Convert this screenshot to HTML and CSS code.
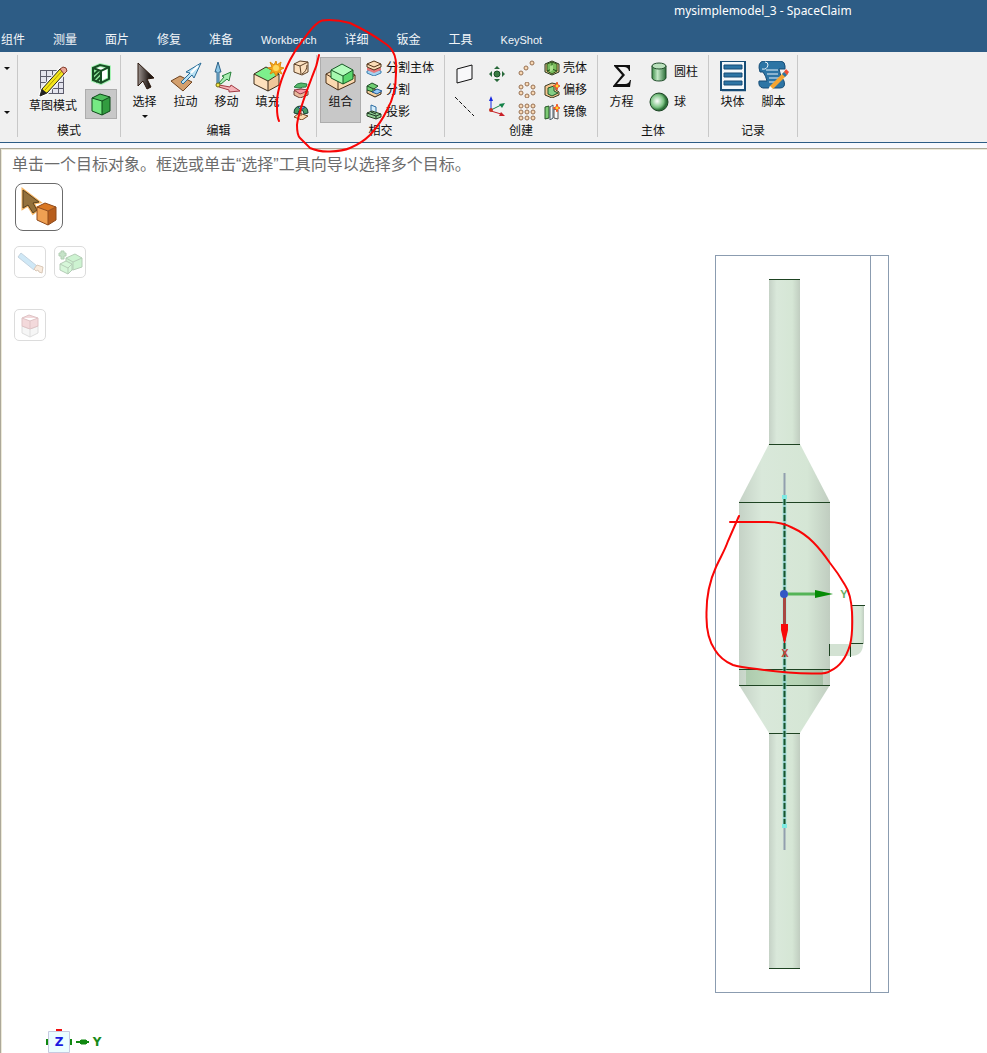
FILE: index.html
```html
<!DOCTYPE html>
<html lang="zh-CN">
<head>
<meta charset="utf-8">
<title>mysimplemodel_3 - SpaceClaim</title>
<link rel="stylesheet" href="styles.css">
</head>
<body>
<header class="titlebar">
  <h1 class="title">mysimplemodel_3 - SpaceClaim</h1>
  <nav class="tabs">
    <button class="tab">组件</button>
    <button class="tab">测量</button>
    <button class="tab">面片</button>
    <button class="tab">修复</button>
    <button class="tab">准备</button>
    <button class="tab latin">Workbench</button>
    <button class="tab">详细</button>
    <button class="tab">钣金</button>
    <button class="tab">工具</button>
    <button class="tab latin">KeyShot</button>
  </nav>
</header>

<div class="ribbon">
  <section class="group stub">
    <button class="drop" aria-label="展开"><span class="caret"></span></button>
    <button class="drop" aria-label="展开"><span class="caret"></span></button>
  </section>

  <section class="group mode">
    <div class="tools">
      <button class="big sketch">
        <svg width="32" height="36" viewBox="0 0 32 36">
          <path d="M3 9h24v24H3z" fill="#e4e4ee"/>
          <path d="M3.500 9v24M9.500 9v24M15.500 9v24M21.500 9v24M26.500 9v24M3 9.500h24M3 15.500h24M3 21.500h24M3 27.500h24M3 32.500h24" stroke="#5c5c6c" fill="none"/>
          <path d="M5 28 23 8l5 4L10 32l-7 3z" fill="#f4e51c" stroke="#fff" stroke-width="3"/>
          <path d="M5 28 23 8l5 4L10 32l-7 3z" fill="#f4e51c" stroke="#222"/>
          <path d="M8 29 25 10" stroke="#a99800" stroke-width="1"/>
          <path d="M23 8l3-2q4 0 4 4l-3 3z" fill="#e9a596" stroke="#85402f"/>
          <path d="M3 35l2-7 5 4z" fill="#222"/>
        </svg>
        <span>草图模式</span>
      </button>
      <div class="stack">
        <button class="toggle" aria-label="剖面模式">
          <svg width="22" height="24" viewBox="0 0 22 24">
            <path d="M3 6 10 3l9 2v12l-8 4-8-3z" fill="#fff" stroke="#a5f3b4" stroke-width="4"/>
            <path d="M3 6l8 3v12l-8-3z" fill="#8fe79c"/>
            <path d="M3 13l6-5M3 18l8-8M6 20l5-5" stroke="#174e24" stroke-width="2"/>
            <path d="M3 6 10 3l9 2v12l-8 4-8-3zM3 6l8 3 8-4M11 9v12" fill="none" stroke="#174e24" stroke-width="2"/>
          </svg>
        </button>
        <button class="toggle on" aria-label="三维模式">
          <svg width="22" height="24" viewBox="0 0 22 24">
            <path d="M2 6v13l10 4V9z" fill="#76ea84"/><path d="M12 9v14l8-4V5z" fill="#329c40"/><path d="M2 6l8-4 10 3-8 4z" fill="#4fc05c"/>
            <path d="M2 6v13l10 4 8-4V5L10 2zM2 6l10 3 8-4M12 9v14" fill="none" stroke="#0d4a18"/>
          </svg>
        </button>
      </div>
    </div>
    <h2 class="caption">模式</h2>
  </section>

  <section class="group edit">
    <div class="tools">
      <button class="big">
        <svg width="32" height="32" viewBox="0 0 32 32">
          <defs><linearGradient id="cur"><stop offset="0" stop-color="#9d9490"/><stop offset=".7" stop-color="#241c18"/></linearGradient></defs>
          <path d="M9 2v23l5-5 4 8 4-2-4-8 7-1z" fill="url(#cur)" stroke="#2a170c"/>
        </svg>
        <span>选择</span><i class="caret"></i>
      </button>
      <button class="big">
        <svg width="32" height="32" viewBox="0 0 32 32">
          <path d="M1 20l9-5 12 6-9 9z" fill="#d3a06e" stroke="#6f431f"/>
          <path d="M11 21 20 12l-4-1L31 2l-7 15-2-3-9 9z" fill="#b9e2f5" stroke="#2b6c96"/><path d="M21 12 28 5" stroke="#fff" stroke-width="2"/>
        </svg>
        <span>拉动</span>
      </button>
      <button class="big">
        <svg width="32" height="32" viewBox="0 0 32 32">
          <path d="M6 23V11H4L7 1l3 10H8v12z" fill="#8cc6e6" stroke="#2b6288"/>
          <path d="M8 22l5-6-2-1 9-4-2 9-2-2-6 5z" fill="#a8eeb2" stroke="#268139"/>
          <path d="M8 24l11 2 1-2 9 6-11 1v-2L8 26z" fill="#f5b3b8" stroke="#a13b44"/>
          <circle cx="7" cy="24" r="2" fill="#f4e94a" stroke="#716713"/>
        </svg>
        <span>移动</span>
      </button>
      <button class="big">
        <svg width="32" height="32" viewBox="0 0 32 32">
          <path d="M2 13v10l14 7V20z" fill="#fde0bd"/><path d="M16 20v10l11-6V13z" fill="#f0c79a"/><path d="M2 13 14 6l13 7-11 7z" fill="#7df08c"/>
          <path d="M2 13v10l14 7 11-6V13L14 6zM2 13l14 7 11-7M16 20v10" fill="none" stroke="#3c2b19"/>
          <path d="M24 0l1 4 4-3-1 5 4 1-4 2 2 4-4-2-2 4-2-4-4 2 2-4-4-2 4-1-2-5 4 3z" fill="#f7a81c" stroke="#d98a0b"/><circle cx="24" cy="7" r="3" fill="#ffd85c"/>
        </svg>
        <span>填充</span>
      </button>
      <div class="stack small">
        <button class="mini" aria-label="融合">
          <svg width="16" height="16" viewBox="0 0 16 16"><path d="M1 4l6-3 8 1v10l-6 3-8-3z" fill="#fbe0c0" stroke="#5b3f26"/><path d="M1 4l6 2 8-4M7 6l1 8M9 14q5-3 5-9" fill="none" stroke="#5b3f26"/></svg>
        </button>
        <button class="mini" aria-label="替换">
          <svg width="16" height="16" viewBox="0 0 16 16"><path d="M1 9l7-2 7 2v4l-8 3-6-3z" fill="#e9b99a" stroke="#6d4438"/><path d="M1 8l7-1 7 1-5 3-3 1z" fill="#f799a4" stroke="#8e3943"/><path d="M1 5q3-4 7-4l6 1-1 3q-4 0-6 1-3 0-6-1z" fill="#55b86a" stroke="#2b7a42"/></svg>
        </button>
        <button class="mini" aria-label="调整面">
          <svg width="16" height="16" viewBox="0 0 16 16"><path d="M1 13l5-4 9 3-6 4z" fill="#fbd9ad" stroke="#754623"/><path d="M1 9Q1 2 8 2t7 7l-4 1q0-4-3-4t-3 4z" fill="#479b64" stroke="#153f31"/><path d="M5 3l3 3 4-3" fill="#7cafe5" stroke="#203d7c"/><path d="M8 6v6" stroke="#754623"/></svg>
        </button>
      </div>
    </div>
    <h2 class="caption">编辑</h2>
  </section>

  <section class="group intersect">
    <div class="tools">
      <button class="big on">
        <svg width="32" height="32" viewBox="0 0 32 32">
          <path d="M1 13v9l12 7 17-8v-7L19 8z" fill="#fbd9b0"/><path d="M1 13v9l12 7 17-8v-7l-4-2M1 13l6-3M1 13l12 7 5-2M30 14l-6 4M13 20v9" fill="none" stroke="#4c3118"/>
          <path d="M6 9v8l12 6V15z" fill="#a5f9ae"/><path d="M18 15v8l10-5V9z" fill="#5bd76d"/><path d="M6 9l11-6 11 6-10 6z" fill="#b4fcbd"/>
          <path d="M6 9v8l12 6 10-5V9L17 3zM6 9l12 6 10-6M18 15v8" fill="none" stroke="#155a24"/>
        </svg>
        <span>组合</span>
      </button>
      <div class="stack list">
        <button class="row"><svg width="16" height="16" viewBox="0 0 16 16"><path d="M1 11l7-2 7 2v2l-7 3-7-3z" fill="#a6d2ef" stroke="#3b7fb0"/><path d="M1 8l7-2 7 2v2l-7 3-7-3z" fill="#e9777a"/><path d="M1 4l7-3 7 3v3l-7 3-7-3z" fill="#fbdcb6" stroke="#513419"/><path d="M1 4l7 3 7-3" fill="none" stroke="#513419"/></svg><span>分割主体</span></button>
        <button class="row"><svg width="16" height="16" viewBox="0 0 16 16"><path d="M1 8l5-2 9 4v2l-6 3-8-4z" fill="#f5d09e" stroke="#342412"/><path d="M1 4l5-3 6 3-4 3zM1 4v4l6 2V7" fill="#6fce73" stroke="#1d4f25"/><path d="M6 10l5-3 5 2-5 3z" fill="#93c9f7" stroke="#255b93"/></svg><span>分割</span></button>
        <button class="row"><svg width="16" height="16" viewBox="0 0 16 16"><path d="M5 1l5 2v7L5 8z" fill="#d6eefc" stroke="#286aa0"/><path d="M1 9l5-2 9 3v3l-5 2-9-3z" fill="#8fce92" stroke="#263f23"/><path d="M1 9l9 3 5-2M10 12v3M5 8l5 2" fill="none" stroke="#1d3425"/></svg><span>投影</span></button>
      </div>
    </div>
    <h2 class="caption">相交</h2>
  </section>

  <section class="group create">
    <div class="tools">
      <div class="stack pair">
        <button class="mini" aria-label="平面"><svg width="20" height="22" viewBox="0 0 20 22"><path d="M2 6l15-4v14L2 20z" fill="#f8f8fa" stroke="#111"/></svg></button>
        <button class="mini" aria-label="轴"><svg width="20" height="22" viewBox="0 0 20 22"><path d="M0 2l19 19" stroke="#111" stroke-dasharray="4 2"/></svg></button>
      </div>
      <div class="stack pair">
        <button class="mini" aria-label="点"><svg width="20" height="22" viewBox="0 0 20 22"><circle cx="10" cy="11" r="3" fill="#397c42" stroke="#184e25"/><path d="M10 3l3 3H7zM10 19l3-3H7zM2 11l3-3v6zM18 11l-3-3v6z" fill="#28693a"/></svg></button>
        <button class="mini" aria-label="坐标系"><svg width="20" height="22" viewBox="0 0 20 22"><path d="M4 16V4" stroke="#1628e0"/><path d="M4 1l2 5H2z" fill="#1628e0"/><path d="M4 15l10-5" stroke="#16834a"/><path d="M18 8l-3 5-3-4z" fill="#16834a"/><path d="M4 16l10 3" stroke="#c92028"/><path d="M18 21l-6 0 2-4z" fill="#c92028"/><circle cx="4" cy="15" r="2" fill="#c73323"/></svg></button>
      </div>
      <div class="stack small">
        <button class="mini" aria-label="线性阵列"><svg width="18" height="16" viewBox="0 0 18 16"><g fill="#f8d8b4" stroke="#967052"><circle cx="3" cy="13" r="2"/><circle cx="8" cy="8" r="2"/><circle cx="14" cy="3" r="2"/></g></svg></button>
        <button class="mini" aria-label="圆形阵列"><svg width="18" height="16" viewBox="0 0 18 16"><g fill="#f8d8b4" stroke="#967052"><circle cx="9" cy="2" r="2"/><circle cx="3" cy="5" r="2"/><circle cx="15" cy="5" r="2"/><circle cx="3" cy="11" r="2"/><circle cx="15" cy="11" r="2"/><circle cx="9" cy="14" r="2"/></g></svg></button>
        <button class="mini" aria-label="填充阵列"><svg width="18" height="18" viewBox="0 -1 18 18"><g fill="#f8d8b4" stroke="#967052"><circle cx="3" cy="2" r="2"/><circle cx="9" cy="2" r="2"/><circle cx="15" cy="2" r="2"/><circle cx="3" cy="8" r="2"/><circle cx="9" cy="8" r="2"/><circle cx="15" cy="8" r="2"/><circle cx="3" cy="14" r="2"/><circle cx="9" cy="14" r="2"/><circle cx="15" cy="14" r="2"/></g></svg></button>
      </div>
      <div class="stack list">
        <button class="row"><svg width="16" height="16" viewBox="0 0 16 16"><path d="M1 4l7-3 7 3v8l-7 3-7-3z" fill="#e8bd88" stroke="#233b20"/><path d="M3 4l5-2 5 2v7l-5 3-5-3z" fill="#78bd5d" stroke="#35551d"/><path d="M8 2v7l-5 2M8 9l5 2" fill="none" stroke="#23501d"/><path d="M6 6l3-1v5l-3 2z" fill="#a9e08c"/></svg><span>壳体</span></button>
        <button class="row"><svg width="16" height="16" viewBox="0 0 16 16"><path d="M1 4l7-3 4 1v6l3 2v3l-7 3-7-3z" fill="#f5c48e" stroke="#3a3a21"/><path d="M4 6l6-2v5l4 2-6 3-4-2z" fill="#84cf86" stroke="#22542b"/><path d="M13 0l1 3 2 1-2 1-1 3-1-3-3-1 3-1z" fill="#ffda21" stroke="#ed542a"/></svg><span>偏移</span></button>
        <button class="row"><svg width="16" height="16" viewBox="0 0 16 16"><path d="M1 3l4-1v12l-4 1z" fill="#7cca74" stroke="#255624"/><path d="M6 3l3-2v13l-3 2z" fill="#f2f5f8" stroke="#465b67"/><path d="M10 5l4 1v9l-4-1z" fill="#fafafa" stroke="#555"/><path d="M13 0l1 3 2 1-2 1-1 3-1-3-3-1 3-1z" fill="#ffda21" stroke="#ed542a"/></svg><span>镜像</span></button>
      </div>
    </div>
    <h2 class="caption">创建</h2>
  </section>

  <section class="group bodies">
    <div class="tools">
      <button class="big">
        <svg width="32" height="32" viewBox="0 0 32 32"><path d="M8 4h16v6h-1q-1-4-5-4h-6l7 8-8 9h8q4 0 5-4h1l-1 7H7v-1l9-11-8-9z" fill="#111"/></svg>
        <span>方程</span>
      </button>
      <div class="stack solids">
        <button class="row"><svg width="20" height="22" viewBox="0 0 20 22">
          <defs><linearGradient id="cyl"><stop offset="0" stop-color="#3d8d48"/><stop offset=".4" stop-color="#c3e9c6"/><stop offset="1" stop-color="#296d37"/></linearGradient><radialGradient id="sph" cx=".4" cy=".45"><stop offset="0" stop-color="#fff"/><stop offset=".7" stop-color="#7dc384"/><stop offset="1" stop-color="#2d7138"/></radialGradient></defs>
          <path d="M3 5v12q1 3 7 3t7-3V5z" fill="url(#cyl)" stroke="#214d2b"/><ellipse cx="10" cy="5" rx="7" ry="3" fill="#b9e0bc" stroke="#214d2b"/></svg><span>圆柱</span></button>
        <button class="row"><svg width="20" height="20" viewBox="0 0 20 20"><circle cx="10" cy="10" r="9" fill="url(#sph)" stroke="#1b4424"/></svg><span>球</span></button>
      </div>
    </div>
    <h2 class="caption">主体</h2>
  </section>

  <section class="group record">
    <div class="tools">
      <button class="big">
        <svg width="32" height="32" viewBox="0 0 32 32"><path d="M5 1h24v30H5z" fill="#b8c6d2"/><path d="M4 0h24v29H4z" fill="#f4f8fb" stroke="#174d76" stroke-width="2"/><path d="M7 4h18v4H7zM7 12h18v4H7zM7 20h18v4H7z" fill="#2d75a5" stroke="#174d76"/></svg>
        <span>块体</span>
      </button>
      <button class="big">
        <svg width="32" height="32" viewBox="0 0 32 32">
          <path d="M5 0h18q4 1 4 5v3h-6q1 7 5 12 2 7-4 7H5q-5-1-4-7h8q-1-5-4-9H2Q-1 2 5 0z" fill="#2d75a5" stroke="#174d76"/>
          <path d="M4 8q5 1 6-4 0-3-3-3M8 9h12M9 13h11M11 17h11M11 21h10" fill="none" stroke="#e8f3f9"/>
          <path d="M12 25 27 10l3 3-15 15-5 2z" fill="#f6a530"/><path d="M12 25l3 3-6 3z" fill="#fff"/><path d="M26 11l2-3 3 3-2 3z" fill="#ef4e38"/><path d="M24 13l2-2 3 3-2 2z" fill="#2d75a5"/>
        </svg>
        <span>脚本</span>
      </button>
    </div>
    <h2 class="caption">记录</h2>
  </section>
</div>

<main class="viewport">
  <p class="prompt">单击一个目标对象。框选或单击“选择”工具向导以选择多个目标。</p>
  <div class="guides">
    <button class="guide primary" aria-label="选择目标">
      <svg width="40" height="40" viewBox="0 0 40 40">
        <path d="M4 3v18l5-3 5 8 4-3-4-7 6-1z" fill="#94713c" stroke="#f5b563" stroke-width="3"/><path d="M4 3v18l5-3 5 8 4-3-4-7 6-1z" fill="#94713c" stroke="#58401e"/>
        <path d="M18 20v13l11 5V24z" fill="#efa052"/><path d="M29 24v14l8-5V20z" fill="#b75e1d"/><path d="M18 20l8-4 11 4-8 4z" fill="#da7722"/><path d="M18 20v13l11 5 8-5V20l-11-4zM18 20l11 4 8-4M29 24v14" fill="none" stroke="#8f4a1a"/>
      </svg>
    </button>
    <div class="pairrow">
      <button class="guide" disabled aria-label="选择刀具">
        <svg width="30" height="30" viewBox="0 0 30 30"><path d="M3 10l3-4 16 13-3 4z" fill="#cfe8f6" stroke="#c3d3df"/><path d="M19 22l3-4 6 2-1 6-3-1-1-2-2 1z" fill="#f9ebdd" stroke="#d9c8b8"/></svg>
      </button>
      <button class="guide" disabled aria-label="选择要合并的主体">
        <svg width="30" height="30" viewBox="0 0 30 30"><path d="M11 11l9-4 7 4v9l-9 3-7-3z" fill="#cdf3d1" stroke="#b5cdb7"/><path d="M11 11l7 4 9-4M18 15v8" fill="none" stroke="#b5cdb7"/><path d="M5 17l6-3 6 3v6l-4 4-8-4z" fill="#d6f7d9" stroke="#b5cdb7"/><path d="M5 17l8 4 4-4M13 21v6" fill="none" stroke="#b5cdb7"/><path d="M6 4h3v2h2v3H9v3H6V9H4V6h2z" fill="#c6e3c8" stroke="#b2cfb4"/></svg>
      </button>
    </div>
    <button class="guide" disabled aria-label="选择要删除的区域">
      <svg width="30" height="30" viewBox="0 0 30 30"><path d="M7 16v7l8 4 8-4v-7l-8 3z" fill="#f6f6f6" stroke="#dedede"/><path d="M7 8l7-3 9 3v8l-8 3-8-3zM7 8l8 3 8-3M15 11v8" fill="#f3d9db" stroke="#dfc3c5"/><path d="M15 19v8" stroke="#dedede"/></svg>
    </button>
  </div>

  <svg class="model" width="200" height="760" viewBox="700 245 200 760" role="img" aria-label="模型">
    <defs>
      <linearGradient id="tube"><stop offset="0" stop-color="#c5d2c6"/><stop offset=".25" stop-color="#d9e8da"/><stop offset=".75" stop-color="#d5e6d5"/><stop offset="1" stop-color="#c0cdc0"/></linearGradient>
      <linearGradient id="band"><stop offset="0" stop-color="#aecbae"/><stop offset=".3" stop-color="#bad8b9"/><stop offset=".7" stop-color="#b5d3b4"/><stop offset="1" stop-color="#a6bfa6"/></linearGradient>
    </defs>
    <g fill="none" stroke="#8b9cb0" shape-rendering="crispEdges"><path d="M715.500 255.500h173v737h-173zM870.500 255v738"/></g>
    <g fill="url(#tube)">
      <path d="M769 279h31v165h-31z"/><path d="M769 444h31l30 58h-91z"/><path d="M739 502h91v183h-91z"/>
      <path d="M739 685h91l-30 48h-31z"/><path d="M769 733h31v235h-31z"/><path d="M851 605h13v39h-13z"/><path d="M829 644h34q0 12-12 12h-22z" fill="#d3e2d3"/>
    </g>
    <path d="M746 670h77v15h-77z" fill="url(#band)"/>
    <g fill="none" stroke="#1e4322" shape-rendering="crispEdges">
      <path d="M769 279.500h31M769 444.500h31M739 502.500h91M739 669.500h91M739 685.500h91M769 733.500h31M769 968.500h31M851 605.500h14M851 643.500h12M829.500 644v12M850.500 643v14"/>
    </g>
    <path d="M784.500 473v377" stroke="#929fae" stroke-width="2"/>
    <path d="M784.500 495v333" stroke="#83e4dc" stroke-width="4" opacity=".5"/>
    <path d="M784.500 499v327" stroke="#17562c" stroke-width="2" stroke-dasharray="6 2"/>
    <path d="M782 495h5v4h-5zM782 824h5v4h-5z" fill="#7eeae2"/>
    <path d="M788 594h28" stroke="#54b457" stroke-width="3"/><path d="M815 590l18 4-18 4z" fill="#058b05"/>
    <path d="M784.500 597v28" stroke="#a84742" stroke-width="3"/><path d="M781 624h7v6l-3 13h-1l-3-13z" fill="#f80909"/>
    <circle cx="784" cy="594" r="4" fill="#3157c5"/>
    <text class="axis y" x="844" y="598">Y</text><text class="axis x" x="785" y="657">X</text>
  </svg>

  <svg class="triad" width="64" height="26" viewBox="44 1027 64 26" role="img" aria-label="坐标方向">
    <path d="M56 1029h6v3h-6z" fill="#f10e0e"/><path d="M46 1039h2v6h-2zM70 1039h2v6h-2z" fill="#118811"/>
    <path d="M48.500 1031.500h21v21h-21z" fill="#ebfdff" stroke="#c7cae0"/>
    <path d="M76 1042h13" stroke="#118811" stroke-width="2"/><path d="M79 1042l2-2h5l2 2-2 2h-5z" fill="#118811" stroke="#118811"/>
    <text class="face" x="59" y="1046">Z</text><text class="dir" x="97" y="1046">Y</text>
  </svg>
</main>

<svg class="markup" width="900" height="700" viewBox="0 0 900 700" aria-hidden="true">
  <path d="M319 55Q317 66 312 77C307 90 298 113 297 125Q297 135 300 138L310 148Q319 152 330 151.500Q343 151 350 148Q362 143 370 135Q381 123 387 110C394 98 396 86 396 73Q397 58 393 52Q391 47 383 42Q369 32 350 23Q335 19 322 20.500C314 23 308 34 303 40Q295 50 290 60C283 74 276 93 277 107Q277 117 279 121"/>
  <path d="M739 516L728 541C725 550 720 558 716 567Q706 589 706.500 615Q706 637 715 650Q721 660 733 665Q739 667 757 669Q787 673 812 673.500Q827 674 830 671Q844 665 850 645Q853 633 852 612Q851 594 845 585Q838 573 830 563Q821 550 813 542Q804 533 793 528Q782 522 768 522H730"/>
</svg>
</body>
</html>
```

FILE: styles.css
```css
* { box-sizing: border-box; }

body {
  margin: 0;
  min-height: 100vh;
  display: flex;
  flex-direction: column;
  position: relative;
  background: #f8f9fd;
  color: #111;
  font-family: "Liberation Sans", "Noto Sans CJK SC", sans-serif;
  font-size: 12px;
  line-height: 18px;
  overflow-x: hidden;
}

button {
  margin: 0;
  padding: 0;
  border: 0;
  background: none;
  color: inherit;
  font: inherit;
  white-space: nowrap;
}

svg { display: block; flex: none; }

.titlebar {
  background: #2d5c85;
  color: #fff;
  height: 52px;
  display: flex;
  flex-direction: column;
  justify-content: space-between;
}

.title {
  margin: 0;
  padding: 2px 0 0 674px;
  font: 400 12px/18px "Noto Sans", sans-serif;
  white-space: nowrap;
}

.tabs { display: flex; padding-bottom: 3px; }
.tab { padding: 0 14px; color: #f2f5f8; }
.tab:first-child { padding-left: 1px; }
.tab.latin { font-size: 11px; }

.ribbon {
  display: flex;
  background: #f0f0f0;
  border-bottom: 1px solid #2d5c85;
  padding: 3px 0 5px;
  margin-bottom: 5px;
}

.group {
  display: flex;
  flex-direction: column;
  justify-content: space-between;
  border-right: 1px solid #c8c8c8;
  flex: none;
}

.tools { display: flex; height: 70px; padding: 2px 3px 0; }
.caption { margin: 0; font-size: 12px; font-weight: 400; line-height: 12px; text-align: center; }

.stub { width: 18px; padding: 3px 0 15px; }
.mode { width: 103px; }
.edit { width: 196px; }
.intersect { width: 128px; }
.create { width: 153px; }
.bodies { width: 111px; }
.record { width: 89px; }

.drop { height: 20px; display: flex; align-items: center; padding-left: 4px; }
.caret {
  border: 3px solid transparent;
  border-top-color: #111;
  border-bottom: 0;
}

.big {
  width: 41px;
  height: 66px;
  padding-top: 4px;
  display: flex;
  flex-direction: column;
  align-items: center;
  flex: none;
}
.big .caret { margin-top: 4px; }
.big.on { background: #c8c8c8; border: 1px solid #adadad; padding-top: 3px; }
.big.sketch { width: 64px; }

.stack { display: flex; flex-direction: column; align-items: center; }
.toggle {
  width: 32px;
  height: 30px;
  display: grid;
  place-items: center;
}
.mode .stack { padding-top: 2px; }
.toggle.on { background: #c8c8c8; border: 1px solid #adadad; }

.small { width: 26px; }
.mini { height: 22px; display: grid; place-items: center; }
.pair { width: 32px; gap: 10px; padding-top: 6px; }
.pair + .pair + .small { width: 28px; }

.row { display: flex; align-items: center; gap: 4px; height: 22px; }
.list { align-items: flex-start; padding-left: 5px; }
.create .list { padding-left: 3px; }
.create .row { gap: 3px; }
.solids { align-items: flex-start; padding: 0 0 0 7px; }
.solids .row { height: 30px; gap: 5px; }
.create .tools { padding-left: 4px; }

.viewport {
  flex: 1;
  position: relative;
  background: #fff;
  border-top: 1px solid #aca899;
  border-left: 1px solid #aca899;
  box-shadow: inset 1px 1px 0 #ece9d8;
  padding: 5px 11px;
}

.prompt {
  margin: 0;
  color: #6c6c6c;
  font-size: 16px;
  line-height: 22px;
}

.guides { display: flex; flex-direction: column; align-items: flex-start; padding: 7px 2px; }
.guide {
  width: 32px;
  height: 32px;
  border: 1px solid #dcdcdc;
  border-radius: 5px;
  background: #fff;
  display: grid;
  place-items: center;
}
.guide.primary { width: 48px; height: 48px; border-color: #6b6b6b; border-radius: 8px; margin-left: 1px; }
.pairrow { display: flex; gap: 8px; padding: 15px 0 31px; }

.model { position: absolute; left: 699px; top: 96px; }
.triad { position: absolute; left: 43px; bottom: 0; }

.axis { font: 700 11px "Liberation Sans", sans-serif; text-anchor: middle; }
.axis.y { fill: #65ad67; }
.axis.x { fill: #c8463f; }
.face, .dir { font: 700 12px "DejaVu Sans", sans-serif; text-anchor: middle; fill: #1a1ae0; }
.dir { fill: #188a18; }

.markup { position: absolute; left: 0; top: 0; pointer-events: none; }
.markup path { fill: none; stroke: #f90606; stroke-width: 2; stroke-linecap: round; }
```
